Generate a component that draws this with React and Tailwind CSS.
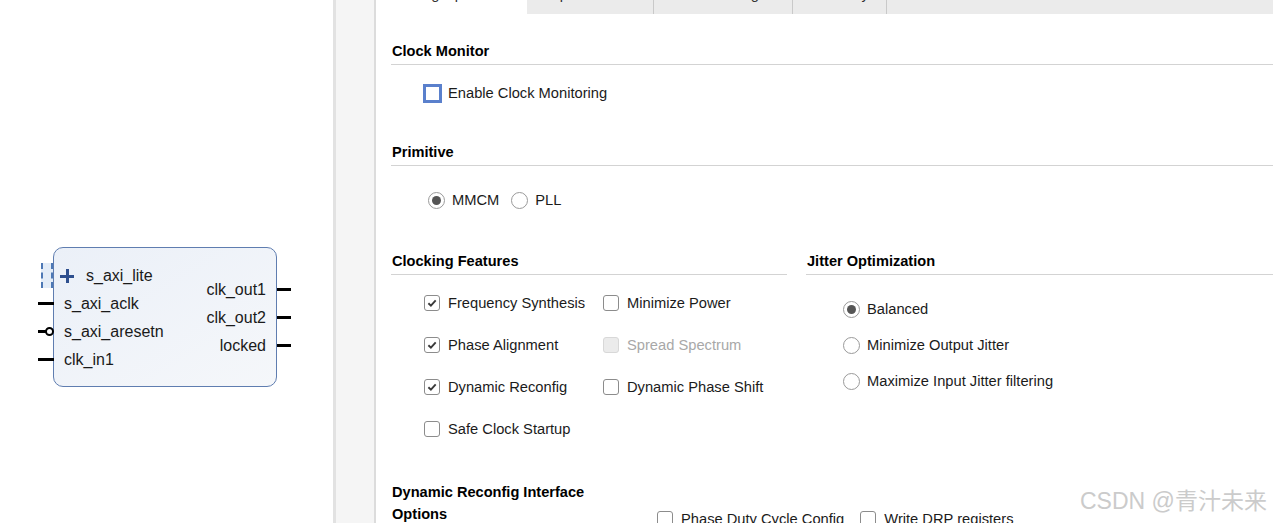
import React from "react";

function Check({ checked, disabled, focus }) {
  if (focus)
    return (
      <span className="w-[19px] h-[19px] border-[3px] border-[#5a80cc] bg-white box-border shrink-0" />
    );
  return (
    <span
      className={`w-4 h-4 rounded-[3px] border box-border flex items-center justify-center shrink-0 ${
        disabled ? "border-[#d8d8d8] bg-[#ebebeb]" : "border-[#8c8c8c] bg-white"
      }`}
    >
      {checked && (
        <svg width="12" height="12" viewBox="0 0 12 12">
          <path d="M2.4 6.3 L4.9 8.7 L9.7 3.4" fill="none" stroke="#3a3a3a" strokeWidth="1.9" />
        </svg>
      )}
    </span>
  );
}

function Radio({ on }) {
  return (
    <span className="w-[17px] h-[17px] rounded-full border-[1.5px] border-[#9a9a9a] bg-white box-border flex items-center justify-center shrink-0">
      {on && <span className="w-[9px] h-[9px] rounded-full bg-[#555555]" />}
    </span>
  );
}

function Heading({ children }) {
  return (
    <div className="h-[26px] leading-[24px] border-b border-[#d3d3d3] text-[14.6px] font-bold text-black pl-[1px]">
      {children}
    </div>
  );
}

function CheckRow({ label, checked, disabled }) {
  return (
    <div className="h-[20px] flex items-center gap-[8px]">
      <Check checked={checked} disabled={disabled} />
      <span className={disabled ? "text-[#a8a8a8]" : "text-[#1b1b1b]"}>{label}</span>
    </div>
  );
}

function RadioRow({ label, on }) {
  return (
    <div className="h-[20px] flex items-center gap-[7px]">
      <Radio on={on} />
      <span className="text-[#1b1b1b]">{label}</span>
    </div>
  );
}

function Pin() {
  return <span className="absolute left-[-16px] top-[12px] w-[16px] h-[3px] bg-black" />;
}

export default function App() {
  return (
    <div className="w-[1273px] h-[523px] overflow-hidden flex bg-white font-['Liberation_Sans',Arial,sans-serif] text-[14.7px] relative">
      {/* Left diagram canvas */}
      <div className="w-[333px] h-full relative bg-white shrink-0">
        <div className="absolute left-[53px] top-[247px] w-[224px] h-[140px] rounded-[10px] border border-[#5f7db0] bg-gradient-to-br from-[#ebf0f8] to-[#f5f7fa] flex justify-between text-[16px] text-[#1a1a1a]">
          <div className="pt-[14px] flex flex-col">
            <div className="h-[28px] flex items-center relative">
              <span className="absolute left-[-13px] top-[1px] w-[12px] h-[25px] bg-[#e3ecf7] border-x-2 border-dashed border-[#4d78b5] box-border" />
              <span className="ml-[6px] w-[14px] h-[14px] relative">
                <span className="absolute left-0 top-[5.5px] w-[14px] h-[3px] bg-[#2e4f8e]" />
                <span className="absolute left-[5.5px] top-0 w-[3px] h-[14px] bg-[#2e4f8e]" />
              </span>
              <span className="ml-[12px]">s_axi_lite</span>
            </div>
            <div className="h-[28px] flex items-center relative pl-[10px]">
              <Pin />
              s_axi_aclk
            </div>
            <div className="h-[28px] flex items-center relative pl-[10px]">
              <span className="absolute left-[-16px] top-[12px] w-[8px] h-[3px] bg-black" />
              <span className="absolute left-[-9px] top-[9px] w-[9px] h-[9px] rounded-full border-2 border-black bg-white box-border" />
              s_axi_aresetn
            </div>
            <div className="h-[28px] flex items-center relative pl-[10px]">
              <Pin />
              clk_in1
            </div>
          </div>
          <div className="pt-[28px] flex flex-col items-end">
            {["clk_out1", "clk_out2", "locked"].map((t) => (
              <div key={t} className="h-[28px] flex items-center relative pr-[10px]">
                {t}
                <span className="absolute right-[-15px] top-[12px] w-[14px] h-[3px] bg-black" />
              </div>
            ))}
          </div>
        </div>
      </div>

      {/* Splitter */}
      <div className="w-[43px] h-full flex shrink-0">
        <div className="w-[3px] h-full bg-[#e2e2e2]" />
        <div className="flex-1 h-full bg-[#f5f5f5]" />
        <div className="w-[2px] h-full bg-[#dcdcdc]" />
      </div>

      {/* Right panel */}
      <div className="flex-1 h-full flex flex-col min-w-0">
        <div className="h-[14px] flex bg-[#ebebeb] shrink-0 overflow-hidden text-[14.7px] text-[#333]">
          <div className="w-[151px] h-full bg-white pl-[7px] overflow-hidden">
            <div className="leading-[16px] mt-[-14px] whitespace-nowrap">Clocking Options</div>
          </div>
          <div className="w-[127px] h-full pl-[9px] overflow-hidden border-r border-[#c9c9c9]">
            <div className="leading-[16px] mt-[-14px] whitespace-nowrap">Output Clocks</div>
          </div>
          <div className="w-[139px] h-full pl-[7px] overflow-hidden border-r border-[#c9c9c9]">
            <div className="leading-[16px] mt-[-14px] whitespace-nowrap">Port Renaming</div>
          </div>
          <div className="w-[94px] h-full pl-[13px] overflow-hidden border-r border-[#c9c9c9]">
            <div className="leading-[16px] mt-[-14px] whitespace-nowrap">Summary</div>
          </div>
        </div>

        <div className="pl-[15px] flex flex-col">
          <div className="mt-[25px]">
            <Heading>Clock Monitor</Heading>
          </div>
          <div className="mt-[18px] h-[20px] flex items-center gap-[6px] pl-[32px]">
            <Check focus />
            <span className="text-[#1b1b1b]">Enable Clock Monitoring</span>
          </div>

          <div className="mt-[37px]">
            <Heading>Primitive</Heading>
          </div>
          <div className="mt-[24px] h-[20px] flex items-center pl-[37px]">
            <RadioRow label="MMCM" on />
            <div className="ml-[12px]">
              <RadioRow label="PLL" />
            </div>
          </div>

          <div className="mt-[39px] flex">
            <div className="w-[396px] shrink-0">
              <Heading>Clocking Features</Heading>
              <div className="mt-[18px] pl-[33px] grid grid-cols-[179px_auto] gap-y-[22px]">
                <CheckRow label="Frequency Synthesis" checked />
                <CheckRow label="Minimize Power" />
                <CheckRow label="Phase Alignment" checked />
                <CheckRow label="Spread Spectrum" disabled />
                <CheckRow label="Dynamic Reconfig" checked />
                <CheckRow label="Dynamic Phase Shift" />
                <CheckRow label="Safe Clock Startup" />
              </div>
            </div>
            <div className="ml-[19px] flex-1">
              <Heading>Jitter Optimization</Heading>
              <div className="mt-[24px] pl-[37px] flex flex-col gap-[16px]">
                <RadioRow label="Balanced" on />
                <RadioRow label="Minimize Output Jitter" />
                <RadioRow label="Maximize Input Jitter filtering" />
              </div>
            </div>
          </div>

          <div className="mt-[42px] flex">
            <div className="w-[225px] shrink-0 pl-[1px] leading-[22px] text-[14.6px] font-bold text-black">
              Dynamic Reconfig Interface Options
            </div>
            <div className="ml-[41px] mt-[28px] h-[20px] flex items-center">
              <CheckRow label="Phase Duty Cycle Config" />
              <div className="ml-[16px]">
                <CheckRow label="Write DRP registers" />
              </div>
            </div>
          </div>
        </div>
      </div>

      <div className="absolute left-[1080px] top-[486px] text-[23px] leading-[30px] text-[#cbcbcb] whitespace-nowrap font-['Liberation_Sans','Noto_Sans_CJK_SC',sans-serif]">
        CSDN @青汁未来
      </div>
    </div>
  );
}
